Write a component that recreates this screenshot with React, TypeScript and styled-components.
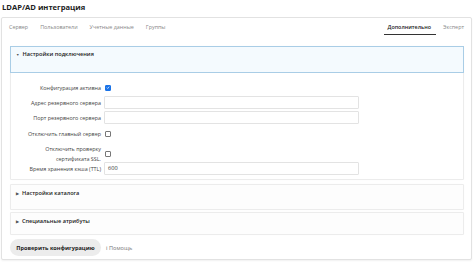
import React from "react";
import styled, { createGlobalStyle } from "styled-components";

const Global = createGlobalStyle`
  html, body { margin: 0; padding: 0; background: #fff; }
  body { font-family: "Open Sans", "Liberation Sans", sans-serif; color: #333; }
  * { box-sizing: border-box; }
`;

const Page = styled.div`
  width: 474px;
  height: 263px;
  padding: 2px 2px 0 1px;
  display: flex;
  flex-direction: column;
  overflow: hidden;
`;

const Title = styled.h1`
  margin: 0 0 0 1px;
  font-size: 7.6px;
  font-weight: 700;
  line-height: 11px;
  height: 15px;
  color: #222;
`;

const Panel = styled.div`
  flex: 0 0 auto;
  height: 243px;
  border: 1px solid #e2e2e2;
  border-radius: 2px;
  box-shadow: 0 1px 2px rgba(0, 0, 0, 0.06);
  background: #fff;
  display: flex;
  flex-direction: column;
`;

const Tabs = styled.div`
  display: flex;
  align-items: stretch;
  height: 18px;
  padding: 0 7px 0 7px;
`;

const Tab = styled.div<{ $active?: boolean }>`
  font-size: 5.4px;
  line-height: 18px;
  margin-right: 12px;
  color: ${(p) => (p.$active ? "#222" : "#888")};
  font-weight: ${(p) => (p.$active ? 600 : 400)};
  position: relative;
  &:last-child { margin-right: 0; }
  ${(p) =>
    p.$active &&
    `&::after { content: ""; position: absolute; left: -3px; right: -5px; bottom: 1px; height: 1px; background: #333; }`}
`;

const Spacer = styled.div`
  flex: 1;
`;

const Content = styled.div`
  padding: 10px 7px 0 8px;
  display: flex;
  flex-direction: column;
`;

const Section = styled.div<{ $mt?: number }>`
  margin-top: ${(p) => p.$mt ?? 0}px;
  border: 1px solid #ececec;
  border-radius: 1px;
  background: #fff;
  box-shadow: 0 0 1px rgba(0,0,0,0.04);
`;

const SectionHeader = styled.div<{ $open?: boolean; $h: number }>`
  height: ${(p) => p.$h}px;
  padding: ${(p) => (p.$open ? 3 : 4)}px 6px 0 5px;
  font-size: 5.6px;
  line-height: 9px;
  font-weight: 600;
  color: #222;
  display: flex;
  align-items: flex-start;
  gap: 3px;
  ${(p) =>
    p.$open
      ? `border: 1px solid #a9cde6; background: #f4fafe; margin: -1px;`
      : `background: #fdfdfd;`}
`;

const Caret = styled.span`
  font-size: 3.5px;
  color: #555;
  line-height: 9px;
`;

const Form = styled.div`
  padding: 9px 0 4px 0;
  display: flex;
  flex-direction: column;
  gap: 2px;
`;

const Row = styled.div<{ $h?: number }>`
  display: grid;
  grid-template-columns: 90px 1fr;
  column-gap: 3px;
  align-items: center;
  height: ${(p) => p.$h ?? 13}px;
`;

const Label = styled.div`
  text-align: right;
  font-size: 5.4px;
  line-height: 10px;
  color: #444;
`;

const Input = styled.div`
  width: 255px;
  height: 13px;
  border: 1px solid #e3e3e3;
  border-radius: 1px;
  font-size: 5.6px;
  line-height: 11px;
  padding: 0 3px;
  color: #333;
`;

const Box = styled.span<{ $checked?: boolean }>`
  width: 6px;
  height: 6px;
  border-radius: 1px;
  border: 1px solid ${(p) => (p.$checked ? "#1a73e8" : "#777")};
  background: ${(p) => (p.$checked ? "#1a73e8" : "#fff")};
  display: inline-flex;
  align-items: center;
  justify-content: center;
  margin-left: 1px;
`;

const Footer = styled.div`
  display: flex;
  align-items: center;
  gap: 5px;
  margin-top: 4px;
`;

const Button = styled.button`
  font-family: inherit;
  font-size: 5.6px;
  font-weight: 700;
  color: #222;
  background: #ececec;
  border: none;
  border-radius: 9px;
  height: 17px;
  width: 91px;
  padding: 0;
`;

const Help = styled.span`
  font-size: 5.6px;
  color: #777;
  display: inline-flex;
  align-items: center;
  gap: 2px;
`;

const Check = ({ checked }: { checked?: boolean }) => (
  <Box $checked={checked}>
    {checked && (
      <svg width="5" height="5" viewBox="0 0 10 10">
        <path d="M2 5.2 L4.2 7.4 L8 2.8" stroke="#fff" strokeWidth="1.8" fill="none" />
      </svg>
    )}
  </Box>
);

export default function App() {
  return (
    <>
      <Global />
      <Page>
        <Title>LDAP/AD интеграция</Title>
        <Panel>
          <Tabs>
            <Tab>Сервер</Tab>
            <Tab>Пользователи</Tab>
            <Tab>Учетные данные</Tab>
            <Tab>Группы</Tab>
            <Spacer />
            <Tab $active>Дополнительно</Tab>
            <Tab>Эксперт</Tab>
          </Tabs>
          <Content>
            <Section>
              <SectionHeader $open $h={27}>
                <Caret>▼</Caret>Настройки подключения
              </SectionHeader>
              <Form>
                <Row>
                  <Label>Конфигурация активна</Label>
                  <Check checked />
                </Row>
                <Row>
                  <Label>Адрес резервного сервера</Label>
                  <Input />
                </Row>
                <Row>
                  <Label>Порт резервного сервера</Label>
                  <Input />
                </Row>
                <Row $h={16}>
                  <Label>Отключить главный сервер</Label>
                  <Check />
                </Row>
                <Row $h={16}>
                  <Label>
                    Отключить проверку
                    <br />
                    сертификата SSL.
                  </Label>
                  <Check />
                </Row>
                <Row>
                  <Label>Время хранения кэша (TTL)</Label>
                  <Input>600</Input>
                </Row>
              </Form>
            </Section>
            <Section $mt={4}>
              <SectionHeader $h={24}>
                <Caret>▶</Caret>Настройки каталога
              </SectionHeader>
            </Section>
            <Section $mt={2}>
              <SectionHeader $h={21}>
                <Caret>▶</Caret>Специальные атрибуты
              </SectionHeader>
            </Section>
            <Footer>
              <Button>Проверить конфигурацию</Button>
              <Help>
                <span>ℹ</span>
                <span>Помощь</span>
              </Help>
            </Footer>
          </Content>
        </Panel>
      </Page>
    </>
  );
}
